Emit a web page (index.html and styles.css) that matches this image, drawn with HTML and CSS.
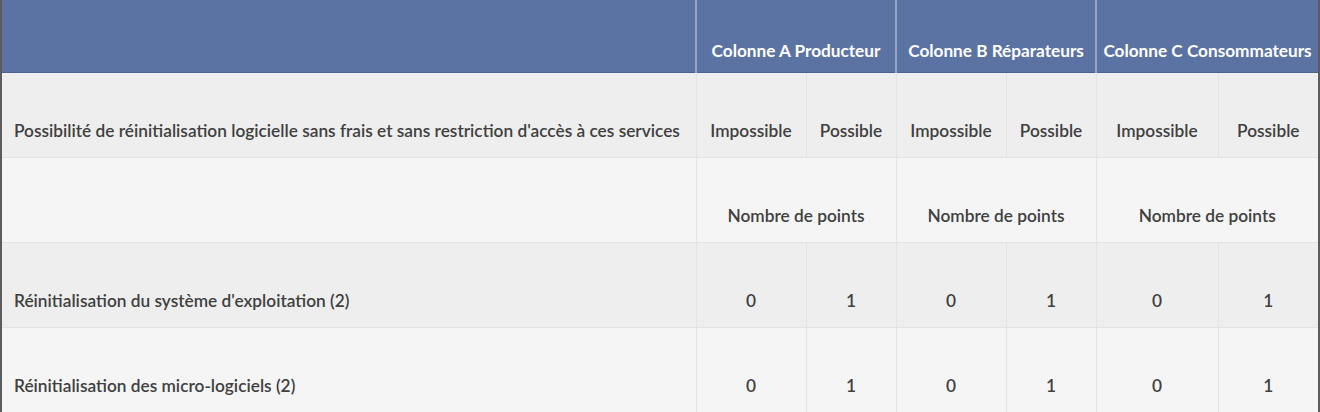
FILE: index.html
```html
<!DOCTYPE html>
<html lang="fr">
<head>
<meta charset="utf-8">
<link rel="stylesheet" href="styles.css">
</head>
<body>
<div class="frame">
<table class="grid">
  <colgroup>
    <col class="c-label">
    <col class="c-a1"><col class="c-a2">
    <col class="c-b1"><col class="c-b2">
    <col class="c-c1"><col class="c-c2">
  </colgroup>
  <thead>
    <tr class="head">
      <th class="blank"></th>
      <th colspan="2">Colonne A Producteur</th>
      <th colspan="2">Colonne B Réparateurs</th>
      <th colspan="2">Colonne C Consommateurs</th>
    </tr>
  </thead>
  <tbody>
    <tr class="r-dark">
      <td class="label">Possibilité de réinitialisation logicielle sans frais et sans restriction d'accès à ces services</td>
      <td>Impossible</td><td>Possible</td>
      <td>Impossible</td><td>Possible</td>
      <td>Impossible</td><td>Possible</td>
    </tr>
    <tr class="r-light">
      <td class="label"></td>
      <td colspan="2">Nombre de points</td>
      <td colspan="2">Nombre de points</td>
      <td colspan="2">Nombre de points</td>
    </tr>
    <tr class="r-dark">
      <td class="label">Réinitialisation du système d'exploitation (2)</td>
      <td>0</td><td>1</td><td>0</td><td>1</td><td>0</td><td>1</td>
    </tr>
    <tr class="r-light">
      <td class="label">Réinitialisation des micro-logiciels (2)</td>
      <td>0</td><td>1</td><td>0</td><td>1</td><td>0</td><td>1</td>
    </tr>
  </tbody>
</table>
</div>
</body>
</html>
```

FILE: styles.css
```css
html, body {
  margin: 0;
  padding: 0;
  background: #f5f5f5;
}
.frame {
  width: 1320px;
  height: 412px;
  overflow: hidden;
  box-sizing: border-box;
  border-left: 2px solid #5c5c5c;
  border-right: 2px solid #5c5c5c;
}
.grid {
  border-collapse: collapse;
  table-layout: fixed;
  width: 1316px;
  font-family: "Lato", "Liberation Sans", sans-serif;
  font-size: 17.3px;
  font-weight: 600;
  color: #404040;
}
.c-label { width: 694px; }
.c-a1 { width: 110px; }
.c-a2 { width: 90px; }
.c-b1 { width: 110px; }
.c-b2 { width: 90px; }
.c-c1 { width: 122px; }
.c-c2 { width: 100px; }

.head th {
  height: 72px;
  box-sizing: border-box;
  background: #5b73a2;
  color: #ffffff;
  font-weight: 700;
  font-size: 17.2px;
  vertical-align: bottom;
  padding: 0 0 11px 0;
  border-bottom: 1px solid #4b6292;
  border-left: 2px solid #93a4c6;
  white-space: nowrap;
}
.head th.blank {
  border-left: none;
}
tbody td {
  height: 85px;
  box-sizing: border-box;
  vertical-align: bottom;
  text-align: center;
  padding: 0 0 16px 0;
  border-left: 1px solid #e3e3e3;
  border-top: 1px solid #e3e3e3;
  white-space: nowrap;
}
tbody td.label {
  text-align: left;
  padding-left: 12px;
  border-left: none;
}
.r-dark td { background: #eeeeee; }
.r-light td { background: #f5f5f5; }
```
